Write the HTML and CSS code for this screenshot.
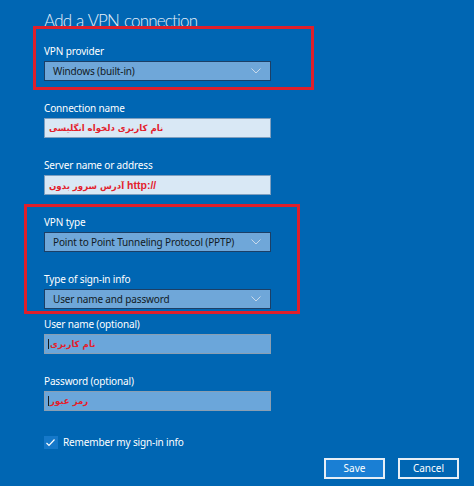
FILE: index.html
```html
<!DOCTYPE html>
<html>
<head>
<meta charset="utf-8">
<link rel="stylesheet" href="styles.css">
</head>
<body>
<div class="page">
  <h1 class="title">Add a VPN connection</h1>

  <div class="field field-first">
    <div class="label">VPN provider</div>
    <div class="select"><span>Windows (built-in)</span><svg class="chev" width="10" height="6" viewBox="0 0 10 6"><polyline points="0.5,0.5 5,5 9.5,0.5" fill="none" stroke="#c9d9ea" stroke-width="1"/></svg></div>
  </div>

  <div class="field">
    <div class="label">Connection name</div>
    <div class="input"><span class="fa">نام کاربری دلخواه انگلیسی</span></div>
  </div>

  <div class="field">
    <div class="label">Server name or address</div>
    <div class="input"><span class="fa" dir="ltr">آدرس سرور بدون <b class="en">http://</b></span></div>
  </div>

  <div class="field">
    <div class="label">VPN type</div>
    <div class="select"><span>Point to Point Tunneling Protocol (PPTP)</span><svg class="chev" width="10" height="6" viewBox="0 0 10 6"><polyline points="0.5,0.5 5,5 9.5,0.5" fill="none" stroke="#c9d9ea" stroke-width="1"/></svg></div>
  </div>

  <div class="field">
    <div class="label">Type of sign-in info</div>
    <div class="select"><span>User name and password</span><svg class="chev" width="10" height="6" viewBox="0 0 10 6"><polyline points="0.5,0.5 5,5 9.5,0.5" fill="none" stroke="#c9d9ea" stroke-width="1"/></svg></div>
  </div>

  <div class="field field-tight">
    <div class="label">User name (optional)</div>
    <div class="input input-dim"><span class="caret"></span><span class="fa">نام کاربری</span></div>
  </div>

  <div class="field">
    <div class="label">Password (optional)</div>
    <div class="input input-dim"><span class="caret"></span><span class="fa">رمز عبور</span></div>
  </div>

  <div class="check-row">
    <span class="checkbox"><svg width="13" height="13" viewBox="0 0 13 13"><polyline points="2.5,7 5,9.5 10.5,3.5" fill="none" stroke="#ffffff" stroke-width="1.2"/></svg></span>
    <span class="check-label">Remember my sign-in info</span>
  </div>

  <div class="buttons">
    <button class="btn btn-primary">Save</button>
    <button class="btn">Cancel</button>
  </div>

  <div class="mark mark-1"></div>
  <div class="mark mark-2"></div>
</div>
</body>
</html>
```
FILE: styles.css
```css
html, body {
  margin: 0;
  padding: 0;
}
body {
  background: #0066b3;
  font-family: "Noto Sans", "Open Sans", sans-serif;
  color: #ffffff;
}
.page {
  position: relative;
  width: 474px;
  height: 486px;
  box-sizing: border-box;
  padding: 9px 15px 0 44px;
  overflow: hidden;
}
.title {
  margin: 0;
  font-family: Lato, sans-serif;
  font-size: 17px;
  font-weight: 300;
  line-height: 24px;
  height: 24px;
  color: #e4eef8;
  letter-spacing: -0.8px;
  word-spacing: 1px;
}
.field {
  margin-top: 21px;
  width: 227px;
}
.field-first {
  margin-top: 12px;
}
.field-tight {
  margin-top: 9px;
}
.label {
  font-size: 10px;
  line-height: 13px;
  height: 13px;
  margin-bottom: 3px;
  letter-spacing: -0.15px;
  white-space: nowrap;
}
.select, .input {
  height: 20px;
  box-sizing: border-box;
  display: flex;
  align-items: center;
  padding: 0 6px 0 8px;
  font-size: 10px;
  letter-spacing: -0.15px;
  white-space: nowrap;
}
.select {
  background: #6fa7d9;
  border: 1px solid #1c3f66;
  color: #111a24;
  justify-content: space-between;
}
.chev {
  display: block;
  margin-right: 3px;
}
.input {
  background: #d9e8f5;
  border: 1px solid #7f9fbf;
  padding-left: 4px;
}
.input-dim {
  background: #6ba6da;
  border: 1px solid #8a9fb3;
  padding-left: 3px;
}
.fa {
  font-family: "DejaVu Sans", sans-serif;
  font-weight: bold;
  font-size: 8.6px;
  letter-spacing: 0;
  color: #e3202c;
}
.fa .en {
  font-family: "Liberation Sans", sans-serif;
  font-size: 10.5px;
  color: #e3202c;
}
.caret {
  display: block;
  width: 1px;
  height: 10px;
  background: #1a1a1a;
  margin-right: 1px;
}
.check-row {
  margin-top: 25px;
  display: flex;
  align-items: center;
  height: 13px;
}
.checkbox {
  width: 14px;
  height: 13px;
  background: #1578c9;
  display: block;
}
.checkbox svg {
  display: block;
}
.check-label {
  margin-left: 5px;
  font-size: 10px;
  letter-spacing: -0.15px;
  line-height: 13px;
}
.buttons {
  margin-top: 9px;
  display: flex;
  justify-content: flex-end;
  gap: 13px;
}
.btn {
  width: 61px;
  height: 21px;
  box-sizing: border-box;
  border: 2px solid #e6eef6;
  background: #0066b3;
  color: #ffffff;
  font-family: "Noto Sans", "Open Sans", sans-serif;
  font-size: 10px;
  padding: 0;
  line-height: 17px;
}
.btn-primary {
  background: #1a7fd4;
}
.mark {
  position: absolute;
  border: 3px solid #e01f2b;
  box-sizing: border-box;
}
.mark-1 {
  left: 33px;
  top: 26px;
  width: 281px;
  height: 64px;
}
.mark-2 {
  left: 24px;
  top: 204px;
  width: 276px;
  height: 110px;
}
```
